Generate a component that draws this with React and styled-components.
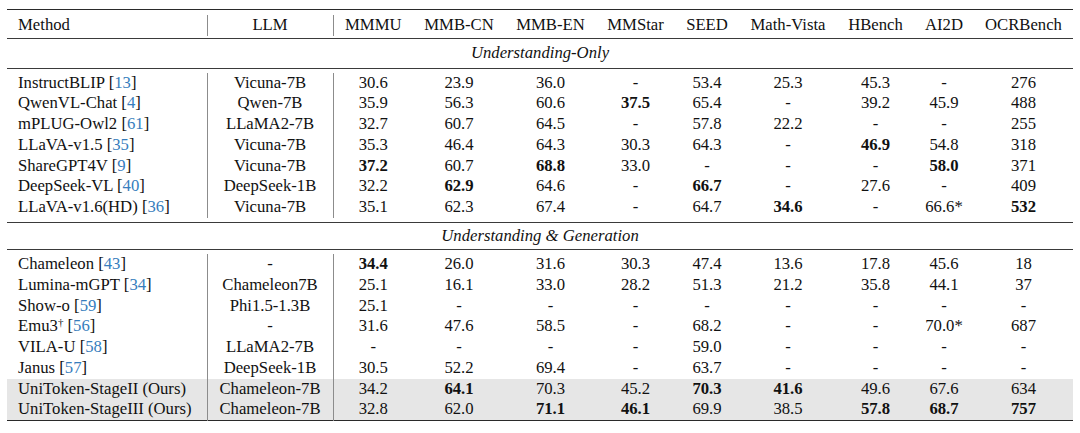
import React from "react";
import styled, { createGlobalStyle } from "styled-components";

const GlobalStyle = createGlobalStyle`
  html, body { margin: 0; padding: 0; background: #ffffff; }
  body { font-family: "Liberation Serif", "Times New Roman", serif; color: #111; }
`;

const Page = styled.div`
  padding: 9px 7px 0;
`;

const Table = styled.table`
  width: 1066px;
  table-layout: fixed;
  border-collapse: collapse;
  font-size: 16.7px;
`;

const Col = styled.col`
  width: ${(p) => p.$w}px;
`;

const Rule = styled.td`
  padding: 0;
  height: ${(p) => p.$h}px;
  font-size: 0;
  line-height: 0;
  border-top: ${(p) => (p.$top ? `${p.$top}px solid #2a2a2a` : "none")};
  border-bottom: ${(p) => (p.$bottom ? `${p.$bottom}px solid #3a3a3a` : "none")};
`;

const Row = styled.tr`
  background: ${(p) => (p.$shade ? "#e6e6e6" : "transparent")};
`;

const Cell = styled.td`
  height: 20.7px;
  padding: 0 11px;
  line-height: 20.7px;
  white-space: nowrap;
  text-align: ${(p) => p.$align || "center"};
  font-weight: ${(p) => (p.$bold ? 700 : 400)};
  border-right: ${(p) => (p.$divider ? "1px solid #8c8c8c" : "none")};
`;

const HeadCell = styled(Cell).attrs({ as: "th" })`
  font-weight: 400;
`;

const Section = styled.td`
  height: ${(p) => p.$h}px;
  padding: 0;
  text-align: center;
  font-style: italic;
  line-height: 20px;
  border-bottom: 1px solid #3a3a3a;
`;

const Cite = styled.span`
  color: #367dbd;
`;

const Dagger = styled.sup`
  font-size: 11px;
  vertical-align: 5px;
  line-height: 0;
`;

const widths = [200, 126, 80, 92, 91, 79, 64, 98, 77, 60, 99];
const COLS = widths.length;
const headers = ["MMMU", "MMB-CN", "MMB-EN", "MMStar", "SEED", "Math-Vista", "HBench", "AI2D", "OCRBench"];

const understanding = [
  ["InstructBLIP", "13", "Vicuna-7B", ["30.6", "23.9", "36.0", "-", "53.4", "25.3", "45.3", "-", "276"]],
  ["QwenVL-Chat", "4", "Qwen-7B", ["35.9", "56.3", "60.6", "!37.5", "65.4", "-", "39.2", "45.9", "488"]],
  ["mPLUG-Owl2", "61", "LLaMA2-7B", ["32.7", "60.7", "64.5", "-", "57.8", "22.2", "-", "-", "255"]],
  ["LLaVA-v1.5", "35", "Vicuna-7B", ["35.3", "46.4", "64.3", "30.3", "64.3", "-", "!46.9", "54.8", "318"]],
  ["ShareGPT4V", "9", "Vicuna-7B", ["!37.2", "60.7", "!68.8", "33.0", "-", "-", "-", "!58.0", "371"]],
  ["DeepSeek-VL", "40", "DeepSeek-1B", ["32.2", "!62.9", "64.6", "-", "!66.7", "-", "27.6", "-", "409"]],
  ["LLaVA-v1.6(HD)", "36", "Vicuna-7B", ["35.1", "62.3", "67.4", "-", "64.7", "!34.6", "-", "66.6*", "!532"]],
];

const generation = [
  ["Chameleon", "43", "-", ["!34.4", "26.0", "31.6", "30.3", "47.4", "13.6", "17.8", "45.6", "18"]],
  ["Lumina-mGPT", "34", "Chameleon7B", ["25.1", "16.1", "33.0", "28.2", "51.3", "21.2", "35.8", "44.1", "37"]],
  ["Show-o", "59", "Phi1.5-1.3B", ["25.1", "-", "-", "-", "-", "-", "-", "-", "-"]],
  ["Emu3", "56", "-", ["31.6", "47.6", "58.5", "-", "68.2", "-", "-", "70.0*", "687"], true],
  ["VILA-U", "58", "LLaMA2-7B", ["-", "-", "-", "-", "59.0", "-", "-", "-", "-"]],
  ["Janus", "57", "DeepSeek-1B", ["30.5", "52.2", "69.4", "-", "63.7", "-", "-", "-", "-"]],
];

const ours = [
  ["UniToken-StageII (Ours)", "Chameleon-7B", ["34.2", "!64.1", "70.3", "45.2", "!70.3", "!41.6", "49.6", "67.6", "634"]],
  ["UniToken-StageIII (Ours)", "Chameleon-7B", ["32.8", "62.0", "!71.1", "!46.1", "69.9", "38.5", "!57.8", "!68.7", "!757"]],
];

function Values({ list }) {
  return list.map((v, i) => {
    const bold = v.startsWith("!");
    return (
      <Cell key={i} $bold={bold}>
        {bold ? v.slice(1) : v}
      </Cell>
    );
  });
}

function ModelRow({ name, cite, llm, values, dagger, shade }) {
  return (
    <Row $shade={shade}>
      <Cell $align="left" $divider>
        {name}
        {dagger && <Dagger>†</Dagger>}
        {cite && (
          <>
            {" ["}
            <Cite>{cite}</Cite>
            {"]"}
          </>
        )}
      </Cell>
      <Cell $divider>{llm}</Cell>
      <Values list={values} />
    </Row>
  );
}

export default function App() {
  return (
    <Page>
      <GlobalStyle />
      <Table>
        <colgroup>
          {widths.map((w, i) => (
            <Col key={i} $w={w} />
          ))}
        </colgroup>
        <thead>
          <tr>
            <Rule colSpan={COLS} $h={5} $top={1.4} />
          </tr>
          <tr>
            <HeadCell $align="left" $divider>Method</HeadCell>
            <HeadCell $divider>LLM</HeadCell>
            {headers.map((h) => (
              <HeadCell key={h}>{h}</HeadCell>
            ))}
          </tr>
          <tr>
            <Rule colSpan={COLS} $h={2} $bottom={1} />
          </tr>
        </thead>
        <tbody>
          <tr>
            <Section colSpan={COLS} $h={29}>Understanding-Only</Section>
          </tr>
          <tr>
            <Rule colSpan={COLS} $h={4} />
          </tr>
          {understanding.map(([name, cite, llm, values]) => (
            <ModelRow key={name} name={name} cite={cite} llm={llm} values={values} />
          ))}
          <tr>
            <Rule colSpan={COLS} $h={4} $bottom={1} />
          </tr>
          <tr>
            <Section colSpan={COLS} $h={26.7}>Understanding &amp; Generation</Section>
          </tr>
          <tr>
            <Rule colSpan={COLS} $h={4} />
          </tr>
          {generation.map(([name, cite, llm, values, dagger]) => (
            <ModelRow key={name} name={name} cite={cite} llm={llm} values={values} dagger={dagger} />
          ))}
          {ours.map(([name, llm, values]) => (
            <ModelRow key={name} name={name} llm={llm} values={values} shade />
          ))}
          <tr>
            <Rule colSpan={COLS} $h={0} $top={1.6} />
          </tr>
        </tbody>
      </Table>
    </Page>
  );
}
